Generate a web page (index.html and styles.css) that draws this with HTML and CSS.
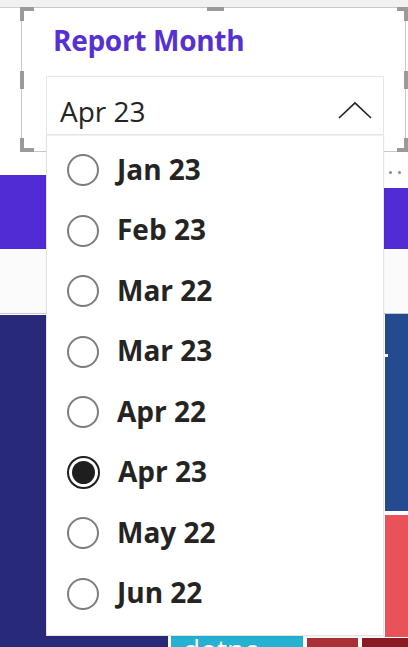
FILE: index.html
```html
<!DOCTYPE html>
<html lang="en">
<head>
<meta charset="utf-8">
<title>Report Month slicer</title>
<link rel="stylesheet" href="styles.css">
</head>
<body>
<div class="canvas">
  <div class="topbar"></div>
  <div class="tile tile-purple-left"></div>
  <div class="tile tile-purple-right"></div>
  <div class="tile tile-white-band"></div>
  <div class="tile tile-navy"></div>
  <div class="tile tile-blue"><span class="dot-marker"></span></div>
  <div class="tile tile-coral"></div>
  <div class="tile tile-cyan"><span class="cyan-label">dotne</span></div>
  <div class="tile tile-red"></div>
  <div class="tile tile-darkred"></div>
  <div class="more-dots"><span></span><span></span></div>

  <div class="slicer">
    <span class="handle h-tl"></span>
    <span class="handle h-tm"></span>
    <span class="handle h-tr"></span>
    <span class="handle h-ml"></span>
    <span class="handle h-mr"></span>
    <span class="handle h-bl"></span>
    <span class="handle h-br"></span>

    <div class="slicer-title">Report Month</div>

    <div class="dropdown">
      <div class="dd-head">
        <span class="dd-value">Apr 23</span>
        <svg class="chevron" width="36" height="38" viewBox="0 0 36 38">
          <polyline points="2,28 18,13 34,28" fill="none" stroke="#252423" stroke-width="1.7" stroke-linejoin="miter"/>
        </svg>
      </div>
      <ul class="dd-list">
        <li class="dd-item"><span class="radio"></span><span class="label">Jan 23</span></li>
        <li class="dd-item"><span class="radio"></span><span class="label">Feb 23</span></li>
        <li class="dd-item"><span class="radio"></span><span class="label">Mar 22</span></li>
        <li class="dd-item"><span class="radio"></span><span class="label">Mar 23</span></li>
        <li class="dd-item"><span class="radio"></span><span class="label">Apr 22</span></li>
        <li class="dd-item selected"><span class="radio"></span><span class="label">Apr 23</span></li>
        <li class="dd-item"><span class="radio"></span><span class="label">May 22</span></li>
        <li class="dd-item"><span class="radio"></span><span class="label">Jun 22</span></li>
      </ul>
    </div>
  </div>
</div>
</body>
</html>
```
FILE: styles.css
```css
* { box-sizing: border-box; }
html, body {
  margin: 0;
  padding: 0;
  width: 408px;
  height: 647px;
  overflow: hidden;
  background: #ffffff;
  font-family: "Open Sans", "Noto Sans", sans-serif;
}
.canvas {
  position: relative;
  width: 408px;
  height: 647px;
  overflow: hidden;
  background: #ffffff;
}
.topbar {
  position: absolute;
  left: 0; top: 0;
  width: 408px; height: 8px;
  background: #f1f1f1;
  border-bottom: 1px solid #cfcfcf;
}
.tile { position: absolute; }
.tile-purple-left { left: 0; top: 175px; width: 200px; height: 74px; background: #512bd4; }
.tile-purple-right { left: 300px; top: 188px; width: 108px; height: 61px; background: #512bd4; }
.tile-white-band { left: 0; top: 249px; width: 408px; height: 65px; background: #fbfbfb; border-bottom: 1px solid #c9c9c9; }
.tile-navy { left: 0; top: 315px; width: 168px; height: 332px; background: #29297a; }
.tile-blue { left: 385px; top: 314px; width: 23px; height: 197px; background: #244b8f; }
.dot-marker {
  position: absolute;
  left: 0; top: 40px;
  width: 3px; height: 3px;
  background: #ffffff;
}
.tile-coral { left: 385px; top: 515px; width: 23px; height: 122px; background: #e8535a; }
.tile-cyan { left: 171px; top: 600px; width: 132px; height: 60px; background: #24b1d2; overflow: hidden; }
.cyan-label {
  display: block;
  padding: 30px 0 0 12px;
  font-size: 28px;
  line-height: 38px;
  color: #ffffff;
  white-space: nowrap;
}
.tile-red { left: 307px; top: 638px; width: 51px; height: 9px; background: #a83036; }
.tile-darkred { left: 362px; top: 638px; width: 46px; height: 9px; background: #8b1b23; }
.more-dots {
  position: absolute;
  left: 389px; top: 171px;
  display: flex;
  gap: 6px;
}
.more-dots span {
  width: 3px; height: 3px;
  border-radius: 50%;
  background: #8c8c8c;
}

/* slicer visual */
.slicer {
  position: absolute;
  left: 21px; top: 7px;
  width: 385px; height: 145px;
  border: 1px solid #c8c8c8;
  background: #ffffff;
  padding: 14px 0 0 24px;
}
.handle { position: absolute; background: #9a9a9a; }
.h-tl, .h-tr, .h-bl, .h-br { background: transparent; width: 14px; height: 14px; }
.h-tl { left: -2px; top: -1px; border-left: 4px solid #9a9a9a; border-top: 4px solid #9a9a9a; }
.h-tr { right: -3px; top: -1px; width: 11px; border-right: 4px solid #9a9a9a; border-top: 4px solid #9a9a9a; }
.h-bl { left: -2px; bottom: -1px; border-left: 4px solid #9a9a9a; border-bottom: 4px solid #9a9a9a; }
.h-br { right: -3px; bottom: -1px; width: 11px; border-right: 4px solid #9a9a9a; border-bottom: 4px solid #9a9a9a; }
.h-tm { left: 185px; top: -1px; width: 17px; height: 4px; }
.h-ml { left: -2px; top: 63px; width: 4px; height: 18px; }
.h-mr { right: -3px; top: 63px; width: 4px; height: 18px; }

.slicer-title {
  padding-left: 7px;
  font-size: 28px;
  line-height: 36px;
  font-weight: 700;
  color: #5530d3;
  letter-spacing: -0.3px;
}
.dropdown {
  position: relative;
  margin-top: 18px;
  width: 338px;
}
.dd-head {
  height: 59px;
  border: 1px solid #e6e6e6;
  display: flex;
  align-items: flex-start;
  justify-content: space-between;
  padding: 13px 10px 0 13px;
  background: #ffffff;
}
.dd-value {
  padding-top: 2px;
  font-size: 28px;
  line-height: 38px;
  color: #252423;
}
.chevron { display: block; }
.dd-list {
  position: absolute;
  left: 0; top: 100%;
  width: 338px;
  margin: 0;
  list-style: none;
  padding: 4px 0 11px;
  background: #ffffff;
  border: 1px solid #e4e4e4;
  border-top: 1px solid #f0f0f0;
  box-shadow: 0 1px 2px rgba(0,0,0,0.06);
}
.dd-item {
  height: 60.5px;
  display: flex;
  align-items: center;
  padding-left: 20px;
}
.radio {
  flex: none;
  width: 32px; height: 32px;
  border-radius: 50%;
  border: 2px solid #7d7d7d;
  position: relative;
}
.selected .radio {
  width: 33px; height: 33px;
  border: 2.5px solid #1e1e1e;
}
.selected .radio::after {
  content: "";
  position: absolute;
  left: 3px; top: 3px; right: 3px; bottom: 3px;
  border-radius: 50%;
  background: #1e1e1e;
}
.label {
  margin-left: 18px;
  padding-bottom: 3px;
  font-size: 28px;
  line-height: 36px;
  font-weight: 700;
  color: #252423;
}
```
